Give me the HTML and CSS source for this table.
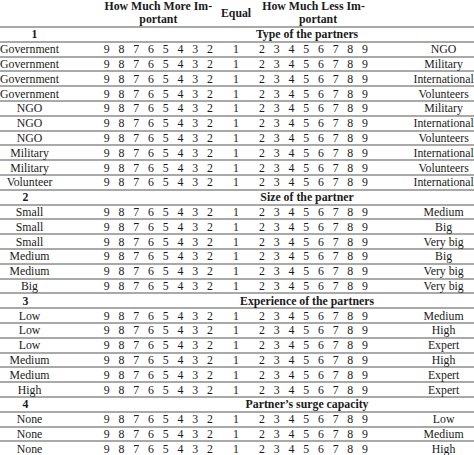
FILE: index.html
```html
<!DOCTYPE html>
<html lang="en">
<head>
<meta charset="utf-8">
<title>Pairwise comparison scale</title>
<link rel="stylesheet" href="styles.css">
</head>
<body>
<table class="matrix">
  <colgroup>
    <col class="c-label">
    <col class="c-num"><col class="c-num"><col class="c-num"><col class="c-num">
    <col class="c-num"><col class="c-num"><col class="c-num"><col class="c-num">
    <col class="c-eq">
    <col class="c-num2"><col class="c-num2"><col class="c-num2"><col class="c-num2">
    <col class="c-num2"><col class="c-num2"><col class="c-num2"><col class="c-num2">
    <col class="c-right">
  </colgroup>
  <thead>
    <tr class="head">
      <th></th>
      <th colspan="8">How Much More Im-<br>portant</th>
      <th>Equal</th>
      <th colspan="8" class="less">How Much Less Im-<br><span class="less-2">portant</span></th>
      <th></th>
    </tr>
  </thead>
  <tbody>
    <tr class="sec"><td class="label sec-num first">1</td><td colspan="8"></td><td colspan="10" class="sec-title">Type of the partners</td></tr>
    <tr><td class="label">Government</td><td>9</td><td>8</td><td>7</td><td>6</td><td>5</td><td>4</td><td>3</td><td>2</td><td>1</td><td>2</td><td>3</td><td>4</td><td>5</td><td>6</td><td>7</td><td>8</td><td>9</td><td class="right">NGO</td></tr>
    <tr><td class="label">Government</td><td>9</td><td>8</td><td>7</td><td>6</td><td>5</td><td>4</td><td>3</td><td>2</td><td>1</td><td>2</td><td>3</td><td>4</td><td>5</td><td>6</td><td>7</td><td>8</td><td>9</td><td class="right">Military</td></tr>
    <tr><td class="label">Government</td><td>9</td><td>8</td><td>7</td><td>6</td><td>5</td><td>4</td><td>3</td><td>2</td><td>1</td><td>2</td><td>3</td><td>4</td><td>5</td><td>6</td><td>7</td><td>8</td><td>9</td><td class="right">International</td></tr>
    <tr><td class="label">Government</td><td>9</td><td>8</td><td>7</td><td>6</td><td>5</td><td>4</td><td>3</td><td>2</td><td>1</td><td>2</td><td>3</td><td>4</td><td>5</td><td>6</td><td>7</td><td>8</td><td>9</td><td class="right">Volunteers</td></tr>
    <tr><td class="label">NGO</td><td>9</td><td>8</td><td>7</td><td>6</td><td>5</td><td>4</td><td>3</td><td>2</td><td>1</td><td>2</td><td>3</td><td>4</td><td>5</td><td>6</td><td>7</td><td>8</td><td>9</td><td class="right">Military</td></tr>
    <tr><td class="label">NGO</td><td>9</td><td>8</td><td>7</td><td>6</td><td>5</td><td>4</td><td>3</td><td>2</td><td>1</td><td>2</td><td>3</td><td>4</td><td>5</td><td>6</td><td>7</td><td>8</td><td>9</td><td class="right">International</td></tr>
    <tr><td class="label">NGO</td><td>9</td><td>8</td><td>7</td><td>6</td><td>5</td><td>4</td><td>3</td><td>2</td><td>1</td><td>2</td><td>3</td><td>4</td><td>5</td><td>6</td><td>7</td><td>8</td><td>9</td><td class="right">Volunteers</td></tr>
    <tr><td class="label">Military</td><td>9</td><td>8</td><td>7</td><td>6</td><td>5</td><td>4</td><td>3</td><td>2</td><td>1</td><td>2</td><td>3</td><td>4</td><td>5</td><td>6</td><td>7</td><td>8</td><td>9</td><td class="right">International</td></tr>
    <tr><td class="label">Military</td><td>9</td><td>8</td><td>7</td><td>6</td><td>5</td><td>4</td><td>3</td><td>2</td><td>1</td><td>2</td><td>3</td><td>4</td><td>5</td><td>6</td><td>7</td><td>8</td><td>9</td><td class="right">Volunteers</td></tr>
    <tr><td class="label">Volunteer</td><td>9</td><td>8</td><td>7</td><td>6</td><td>5</td><td>4</td><td>3</td><td>2</td><td>1</td><td>2</td><td>3</td><td>4</td><td>5</td><td>6</td><td>7</td><td>8</td><td>9</td><td class="right">International</td></tr>
    <tr class="sec"><td class="label sec-num">2</td><td colspan="8"></td><td colspan="10" class="sec-title">Size of the partner</td></tr>
    <tr><td class="label">Small</td><td>9</td><td>8</td><td>7</td><td>6</td><td>5</td><td>4</td><td>3</td><td>2</td><td>1</td><td>2</td><td>3</td><td>4</td><td>5</td><td>6</td><td>7</td><td>8</td><td>9</td><td class="right">Medium</td></tr>
    <tr><td class="label">Small</td><td>9</td><td>8</td><td>7</td><td>6</td><td>5</td><td>4</td><td>3</td><td>2</td><td>1</td><td>2</td><td>3</td><td>4</td><td>5</td><td>6</td><td>7</td><td>8</td><td>9</td><td class="right">Big</td></tr>
    <tr><td class="label">Small</td><td>9</td><td>8</td><td>7</td><td>6</td><td>5</td><td>4</td><td>3</td><td>2</td><td>1</td><td>2</td><td>3</td><td>4</td><td>5</td><td>6</td><td>7</td><td>8</td><td>9</td><td class="right">Very big</td></tr>
    <tr><td class="label">Medium</td><td>9</td><td>8</td><td>7</td><td>6</td><td>5</td><td>4</td><td>3</td><td>2</td><td>1</td><td>2</td><td>3</td><td>4</td><td>5</td><td>6</td><td>7</td><td>8</td><td>9</td><td class="right">Big</td></tr>
    <tr><td class="label">Medium</td><td>9</td><td>8</td><td>7</td><td>6</td><td>5</td><td>4</td><td>3</td><td>2</td><td>1</td><td>2</td><td>3</td><td>4</td><td>5</td><td>6</td><td>7</td><td>8</td><td>9</td><td class="right">Very big</td></tr>
    <tr><td class="label">Big</td><td>9</td><td>8</td><td>7</td><td>6</td><td>5</td><td>4</td><td>3</td><td>2</td><td>1</td><td>2</td><td>3</td><td>4</td><td>5</td><td>6</td><td>7</td><td>8</td><td>9</td><td class="right">Very big</td></tr>
    <tr class="sec"><td class="label sec-num">3</td><td colspan="8"></td><td colspan="10" class="sec-title">Experience of the partners</td></tr>
    <tr><td class="label">Low</td><td>9</td><td>8</td><td>7</td><td>6</td><td>5</td><td>4</td><td>3</td><td>2</td><td>1</td><td>2</td><td>3</td><td>4</td><td>5</td><td>6</td><td>7</td><td>8</td><td>9</td><td class="right">Medium</td></tr>
    <tr><td class="label">Low</td><td>9</td><td>8</td><td>7</td><td>6</td><td>5</td><td>4</td><td>3</td><td>2</td><td>1</td><td>2</td><td>3</td><td>4</td><td>5</td><td>6</td><td>7</td><td>8</td><td>9</td><td class="right">High</td></tr>
    <tr><td class="label">Low</td><td>9</td><td>8</td><td>7</td><td>6</td><td>5</td><td>4</td><td>3</td><td>2</td><td>1</td><td>2</td><td>3</td><td>4</td><td>5</td><td>6</td><td>7</td><td>8</td><td>9</td><td class="right">Expert</td></tr>
    <tr><td class="label">Medium</td><td>9</td><td>8</td><td>7</td><td>6</td><td>5</td><td>4</td><td>3</td><td>2</td><td>1</td><td>2</td><td>3</td><td>4</td><td>5</td><td>6</td><td>7</td><td>8</td><td>9</td><td class="right">High</td></tr>
    <tr><td class="label">Medium</td><td>9</td><td>8</td><td>7</td><td>6</td><td>5</td><td>4</td><td>3</td><td>2</td><td>1</td><td>2</td><td>3</td><td>4</td><td>5</td><td>6</td><td>7</td><td>8</td><td>9</td><td class="right">Expert</td></tr>
    <tr><td class="label">High</td><td>9</td><td>8</td><td>7</td><td>6</td><td>5</td><td>4</td><td>3</td><td>2</td><td>1</td><td>2</td><td>3</td><td>4</td><td>5</td><td>6</td><td>7</td><td>8</td><td>9</td><td class="right">Expert</td></tr>
    <tr class="sec"><td class="label sec-num">4</td><td colspan="8"></td><td colspan="10" class="sec-title">Partner’s surge capacity</td></tr>
    <tr><td class="label">None</td><td>9</td><td>8</td><td>7</td><td>6</td><td>5</td><td>4</td><td>3</td><td>2</td><td>1</td><td>2</td><td>3</td><td>4</td><td>5</td><td>6</td><td>7</td><td>8</td><td>9</td><td class="right">Low</td></tr>
    <tr><td class="label">None</td><td>9</td><td>8</td><td>7</td><td>6</td><td>5</td><td>4</td><td>3</td><td>2</td><td>1</td><td>2</td><td>3</td><td>4</td><td>5</td><td>6</td><td>7</td><td>8</td><td>9</td><td class="right">Medium</td></tr>
    <tr><td class="label">None</td><td>9</td><td>8</td><td>7</td><td>6</td><td>5</td><td>4</td><td>3</td><td>2</td><td>1</td><td>2</td><td>3</td><td>4</td><td>5</td><td>6</td><td>7</td><td>8</td><td>9</td><td class="right">High</td></tr>
  </tbody>
</table>
</body>
</html>
```

FILE: styles.css
```css
html, body {
  margin: 0;
  padding: 0;
  overflow: hidden;
  background: #ffffff;
}

body {
  font-family: "Liberation Serif", "Times New Roman", serif;
  font-size: 11.8px;
  color: #1a1a1a;
}

.matrix {
  border-collapse: collapse;
  table-layout: fixed;
  width: 474px;
}

.c-label { width: 99.3px; }
.c-num { width: 14.75px; }
.c-eq { width: 37.35px; }
.c-num2 { width: 14.71px; }
.c-right { width: 101.7px; }

.matrix td,
.matrix th {
  padding: 0;
  text-align: center;
  white-space: nowrap;
  line-height: 11px;
  vertical-align: middle;
}

.matrix tbody tr {
  height: 14.8px;
  border-top: 2px solid #a9a9a9;
}

.matrix tbody td {
  padding-top: 1px;
}

.head th {
  height: 25.5px;
  font-weight: bold;
  line-height: 13px;
  padding-top: 0;
}

.less-2 {
  padding-left: 9px;
}

.matrix td.label {
  padding-right: 40.3px;
}

.matrix td.right {
  padding-left: 40.7px;
}

.sec td {
  font-weight: bold;
}

.matrix td.sec-num {
  padding-right: 48.3px;
}

.matrix td.sec-num.first {
  padding-right: 30.3px;
}

.matrix td.sec-title {
  padding-right: 77.4px;
}
```
